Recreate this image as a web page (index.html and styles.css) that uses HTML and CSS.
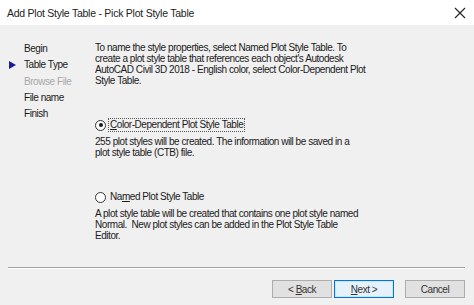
FILE: index.html
```html
<!DOCTYPE html>
<html>
<head>
<meta charset="utf-8">
<link rel="stylesheet" href="styles.css">
</head>
<body>
<div class="window">
  <div class="titlebar">
    <span class="title">Add Plot Style Table - Pick Plot Style Table</span>
    <svg class="close" width="12" height="12" viewBox="0 0 12 12"><path d="M1 1 L11 11 M11 1 L1 11" stroke="#222" stroke-width="1.1" fill="none"/></svg>
  </div>
  <div class="main">
    <ul class="nav">
      <li>Begin</li>
      <li class="current"><span class="arrow"></span>Table Type</li>
      <li class="disabled">Browse File</li>
      <li>File name</li>
      <li>Finish</li>
    </ul>
    <div class="content">
      <p class="intro">To name the style properties, select Named Plot Style Table. To<br>create a plot style table that references each object's Autodesk<br>AutoCAD Civil 3D 2018 - English color, select Color-Dependent Plot<br>Style Table.</p>
      <div class="option first">
        <div class="radio-row"><span class="radio checked"></span><span class="label focus"><u>C</u>olor-Dependent Plot Style Table</span></div>
        <p class="desc">255 plot styles will be created. The information will be saved in a<br>plot style table (CTB) file.</p>
      </div>
      <div class="option second">
        <div class="radio-row"><span class="radio"></span><span class="label">Na<u>m</u>ed Plot Style Table</span></div>
        <p class="desc">A plot style table will be created that contains one plot style named<br>Normal.&nbsp; New plot styles can be added in the Plot Style Table<br>Editor.</p>
      </div>
    </div>
  </div>
  <div class="footer">
    <div class="sep"></div>
    <div class="buttons">
      <button class="btn">&lt; <u>B</u>ack</button>
      <button class="btn default"><u>N</u>ext &gt;</button>
      <button class="btn cancel">Cancel</button>
    </div>
  </div>
</div>
</body>
</html>
```
FILE: styles.css
```css
html, body {
  margin: 0;
  padding: 0;
}
body {
  width: 474px;
  height: 305px;
  overflow: hidden;
  background: #f0f0f0;
  font-family: "Liberation Sans", Arial, sans-serif;
  font-size: 10px;
  letter-spacing: -0.45px;
  color: #1a1a1a;
}
.window {
  display: flex;
  flex-direction: column;
  height: 305px;
}
.titlebar {
  height: 25px;
  background: #ffffff;
  display: flex;
  align-items: center;
  justify-content: space-between;
  padding: 0 8px 0 7px;
  flex: none;
}
.title {
  font-family: "Liberation Sans", Arial, sans-serif;
  font-size: 10.5px;
  letter-spacing: -0.25px;
  color: #222;
}
.close {
  display: block;
  margin-top: 1px;
}
.main {
  display: flex;
  flex: 1;
}
.nav {
  list-style: none;
  margin: 0;
  padding: 18px 0 0 0;
  width: 95px;
  flex: none;
}
.nav li {
  position: relative;
  height: 16.3px;
  line-height: 12px;
  padding-left: 24px;
  color: #1a1a1a;
}
.nav li.disabled {
  color: #a8a8a8;
}
.arrow {
  position: absolute;
  left: 9px;
  top: 2px;
  width: 0;
  height: 0;
  border-top: 4px solid transparent;
  border-bottom: 4px solid transparent;
  border-left: 7px solid #1a1a9a;
}
.content {
  flex: 1;
  padding-top: 17px;
  padding-right: 10px;
}
.intro {
  margin: 0;
  line-height: 11px;
  width: 290px;
}
.option.first {
  margin-top: 32px;
}
.option.second {
  margin-top: 32px;
}
.radio-row {
  display: flex;
  align-items: center;
  height: 14px;
}
.radio {
  width: 11px;
  height: 11px;
  border: 1px solid #333;
  border-radius: 50%;
  box-sizing: border-box;
  background: #fff;
  margin-right: 2px;
  position: relative;
  flex: none;
}
.radio.checked::after {
  content: "";
  position: absolute;
  left: 2.5px;
  top: 2.5px;
  width: 4px;
  height: 4px;
  border-radius: 50%;
  background: #1a1a1a;
}
.label {
  line-height: 12px;
  padding: 0 1px;
  border: 1px solid transparent;
}
.label.focus {
  border: 1px dotted #555;
}
.desc {
  margin: 4px 0 0 0;
  line-height: 11px;
  width: 290px;
}
.footer {
  flex: none;
  padding: 0 9px 7px 8px;
}
.sep {
  height: 0;
  border-top: 1px solid #a0a0a0;
  border-bottom: 1px solid #ffffff;
}
.buttons {
  display: flex;
  justify-content: flex-end;
  margin-top: 11px;
}
.btn {
  width: 60px;
  height: 18px;
  padding: 0;
  margin: 0 0 0 2px;
  font-family: "Liberation Sans", Arial, sans-serif;
  font-size: 10px;
  letter-spacing: -0.45px;
  color: #333;
  background: #e1e1e1;
  border: 1px solid #adadad;
  box-sizing: border-box;
}
.btn.default {
  border: 1px solid #0078d7;
  box-shadow: inset 0 0 0 1px #cce4f7;
  background: #e5f1fb;
}
.btn.cancel {
  margin-left: 11px;
}
```
